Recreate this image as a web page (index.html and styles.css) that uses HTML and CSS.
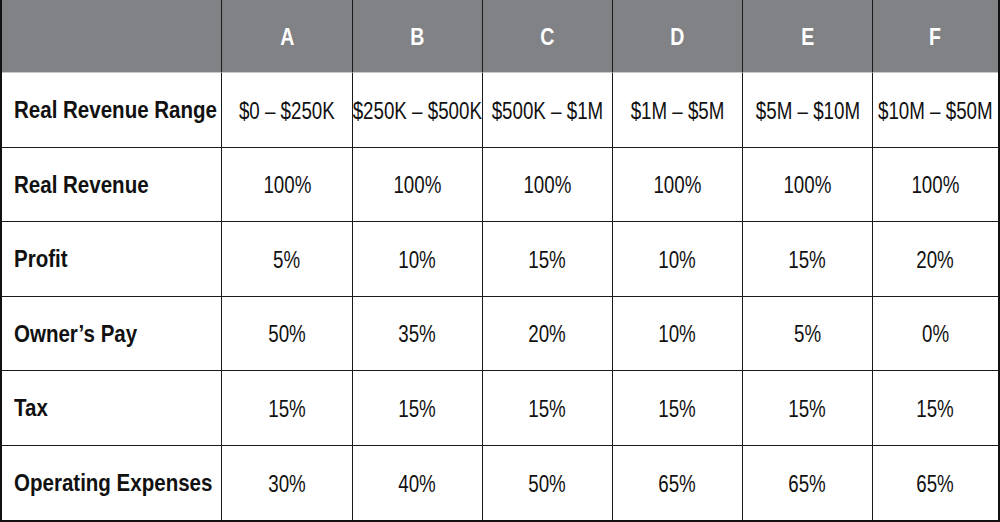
FILE: index.html
```html
<!DOCTYPE html>
<html lang="en">
<head>
<meta charset="utf-8">
<title>Revenue Table</title>
<link rel="stylesheet" href="styles.css">
</head>
<body>
<div class="table">
  <div class="cell head"></div>
  <div class="cell head"><span class="t">A</span></div>
  <div class="cell head"><span class="t">B</span></div>
  <div class="cell head"><span class="t">C</span></div>
  <div class="cell head"><span class="t">D</span></div>
  <div class="cell head"><span class="t">E</span></div>
  <div class="cell head last"><span class="t">F</span></div>

  <div class="cell label"><span class="t">Real Revenue Range</span></div>
  <div class="cell"><span class="t">$0 – $250K</span></div>
  <div class="cell"><span class="t">$250K – $500K</span></div>
  <div class="cell"><span class="t">$500K – $1M</span></div>
  <div class="cell"><span class="t">$1M – $5M</span></div>
  <div class="cell"><span class="t">$5M – $10M</span></div>
  <div class="cell last"><span class="t">$10M – $50M</span></div>

  <div class="cell label"><span class="t">Real Revenue</span></div>
  <div class="cell"><span class="t">100%</span></div>
  <div class="cell"><span class="t">100%</span></div>
  <div class="cell"><span class="t">100%</span></div>
  <div class="cell"><span class="t">100%</span></div>
  <div class="cell"><span class="t">100%</span></div>
  <div class="cell last"><span class="t">100%</span></div>

  <div class="cell label"><span class="t">Profit</span></div>
  <div class="cell"><span class="t">5%</span></div>
  <div class="cell"><span class="t">10%</span></div>
  <div class="cell"><span class="t">15%</span></div>
  <div class="cell"><span class="t">10%</span></div>
  <div class="cell"><span class="t">15%</span></div>
  <div class="cell last"><span class="t">20%</span></div>

  <div class="cell label"><span class="t">Owner’s Pay</span></div>
  <div class="cell"><span class="t">50%</span></div>
  <div class="cell"><span class="t">35%</span></div>
  <div class="cell"><span class="t">20%</span></div>
  <div class="cell"><span class="t">10%</span></div>
  <div class="cell"><span class="t">5%</span></div>
  <div class="cell last"><span class="t">0%</span></div>

  <div class="cell label"><span class="t">Tax</span></div>
  <div class="cell"><span class="t">15%</span></div>
  <div class="cell"><span class="t">15%</span></div>
  <div class="cell"><span class="t">15%</span></div>
  <div class="cell"><span class="t">15%</span></div>
  <div class="cell"><span class="t">15%</span></div>
  <div class="cell last"><span class="t">15%</span></div>

  <div class="cell label bottom"><span class="t">Operating Expenses</span></div>
  <div class="cell bottom"><span class="t">30%</span></div>
  <div class="cell bottom"><span class="t">40%</span></div>
  <div class="cell bottom"><span class="t">50%</span></div>
  <div class="cell bottom"><span class="t">65%</span></div>
  <div class="cell bottom"><span class="t">65%</span></div>
  <div class="cell bottom last"><span class="t">65%</span></div>
</div>
</body>
</html>
```

FILE: styles.css
```css
html, body {
  margin: 0;
  padding: 0;
  background: #ffffff;
}

body {
  width: 1000px;
  height: 522px;
  overflow: hidden;
  font-family: "Liberation Sans", Arial, sans-serif;
  color: #111111;
}

.table {
  box-sizing: border-box;
  width: 1000px;
  height: 522px;
  border-left: 2px solid #111111;
  border-right: 2px solid #111111;
  border-bottom: 2px solid #111111;
  display: grid;
  grid-template-columns: 220px 131px 130px 130px 130px 130px 1fr;
  grid-template-rows: 73px repeat(6, 1fr);
}

.cell {
  box-sizing: border-box;
  border-right: 1px solid #1a1a1a;
  border-bottom: 1px solid #1a1a1a;
  display: flex;
  align-items: center;
  justify-content: center;
  font-size: 23px;
  white-space: nowrap;
  min-width: 0;
  padding-top: 3px;
}

.cell.last {
  border-right: none;
}

.cell.bottom {
  border-bottom: none;
}

.t {
  display: inline-block;
  transform: scaleX(0.815);
  transform-origin: center;
}

.head {
  background: #818285;
  color: #ffffff;
  font-weight: bold;
  font-size: 23px;
  padding-top: 2px;
  border-bottom: 1px solid #c9c9ca;
}

.head .t {
  transform: scaleX(0.85);
}

.label {
  justify-content: flex-start;
  padding-left: 12px;
  padding-top: 1px;
  font-weight: bold;
  font-size: 24px;
}

.label .t {
  transform: scaleX(0.855);
  transform-origin: left center;
}
```
